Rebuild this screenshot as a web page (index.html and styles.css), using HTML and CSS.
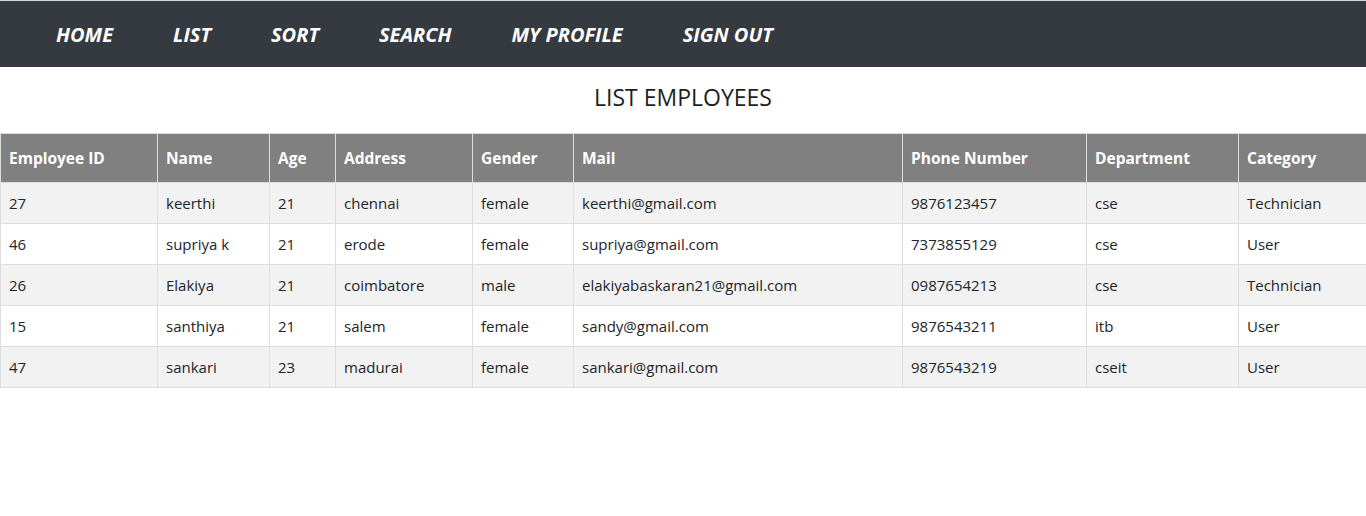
FILE: index.html
```html
<!DOCTYPE html>
<html>
<head>
<meta charset="utf-8">
<link rel="stylesheet" href="styles.css">
</head>
<body>
<nav class="topnav">
  <ul class="menu">
    <li><a href="#">HOME</a></li>
    <li><a href="#">LIST</a></li>
    <li><a href="#">SORT</a></li>
    <li><a href="#">SEARCH</a></li>
    <li><a href="#">MY PROFILE</a></li>
    <li><a href="#">SIGN OUT</a></li>
  </ul>
</nav>
<h3 class="title">LIST EMPLOYEES</h3>
<table class="emp">
  <colgroup>
    <col class="c1"><col class="c2"><col class="c3"><col class="c4"><col class="c5"><col class="c6"><col class="c7"><col class="c8"><col class="c9">
  </colgroup>
  <tbody>
    <tr><th>Employee ID</th><th>Name</th><th>Age</th><th>Address</th><th>Gender</th><th>Mail</th><th>Phone Number</th><th>Department</th><th>Category</th></tr>
    <tr><td>27</td><td>keerthi</td><td>21</td><td>chennai</td><td>female</td><td>keerthi@gmail.com</td><td>9876123457</td><td>cse</td><td>Technician</td></tr>
    <tr><td>46</td><td>supriya k</td><td>21</td><td>erode</td><td>female</td><td>supriya@gmail.com</td><td>7373855129</td><td>cse</td><td>User</td></tr>
    <tr><td>26</td><td>Elakiya</td><td>21</td><td>coimbatore</td><td>male</td><td>elakiyabaskaran21@gmail.com</td><td>0987654213</td><td>cse</td><td>Technician</td></tr>
    <tr><td>15</td><td>santhiya</td><td>21</td><td>salem</td><td>female</td><td>sandy@gmail.com</td><td>9876543211</td><td>itb</td><td>User</td></tr>
    <tr><td>47</td><td>sankari</td><td>23</td><td>madurai</td><td>female</td><td>sankari@gmail.com</td><td>9876543219</td><td>cseit</td><td>User</td></tr>
  </tbody>
</table>
</body>
</html>
```
FILE: styles.css
```css
html, body {
  margin: 0;
  padding: 0;
  background: #fff;
  font-family: "Open Sans", "Noto Sans", sans-serif;
  color: #212529;
}
.topnav {
  border-top: 1px solid #d6d6d6;
  background: #343a40;
  height: 66px;
  display: flex;
  align-items: center;
}
.menu {
  list-style: none;
  margin: 0;
  padding: 0 0 0 26px;
  display: flex;
}
.menu a {
  display: block;
  padding: 0 30px;
  color: #fff;
  text-decoration: none;
  font-style: italic;
  font-weight: 700;
  font-size: 20px;
  letter-spacing: 0;
}
.title {
  margin: 0;
  padding: 16px 0 22px;
  text-align: center;
  font-size: 23px;
  font-weight: 500;
  line-height: 28px;
  color: #1c1f23;
}
.emp {
  width: 100%;
  border-collapse: collapse;
  table-layout: fixed;
  font-size: 15px;
}
.c1 { width: 157px; }
.c2 { width: 112px; }
.c3 { width: 66px; }
.c4 { width: 137px; }
.c5 { width: 101px; }
.c6 { width: 329px; }
.c7 { width: 184px; }
.c8 { width: 152px; }
.c9 { width: 128px; }
.emp th, .emp td {
  border: 1px solid #ddd;
  padding: 8px;
  text-align: left;
  line-height: 24px;
  white-space: nowrap;
  overflow: hidden;
}
.emp th {
  padding-top: 12px;
  padding-bottom: 12px;
  background: #808080;
  color: #fff;
  font-weight: 700;
  font-size: 15.5px;
}
.emp tr:nth-child(even) {
  background: #f2f2f2;
}
```
